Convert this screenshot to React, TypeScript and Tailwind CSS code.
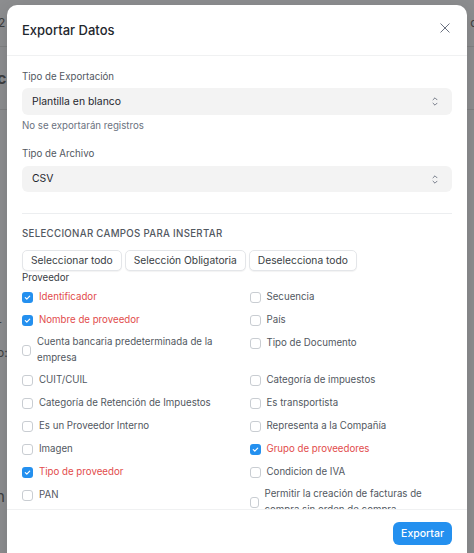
import React from "react";

type Field = { label: string; checked?: boolean; req?: boolean; squish?: boolean };

const left: Field[] = [
  { label: "Identificador", checked: true, req: true },
  { label: "Nombre de proveedor", checked: true, req: true },
  { label: "Cuenta bancaria predeterminada de la empresa", squish: true },
  { label: "CUIT/CUIL" },
  { label: "Categoría de Retención de Impuestos" },
  { label: "Es un Proveedor Interno" },
  { label: "Imagen" },
  { label: "Tipo de proveedor", checked: true, req: true },
  { label: "PAN" },
];

const right: Field[] = [
  { label: "Secuencia" },
  { label: "País" },
  { label: "Tipo de Documento" },
  { label: "Categoría de impuestos" },
  { label: "Es transportista" },
  { label: "Representa a la Compañía" },
  { label: "Grupo de proveedores", checked: true, req: true },
  { label: "Condicion de IVA" },
  { label: "Permitir la creación de facturas de compra sin orden de compra", squish: true },
];

function Check({ checked, squish }: { checked?: boolean; squish?: boolean }) {
  if (checked) {
    return (
      <span className="flex h-[11px] w-[11px] shrink-0 items-center justify-center rounded-[3px] bg-[#2490ef]">
        <svg width="7" height="7" viewBox="0 0 8 8" fill="none">
          <path d="M1.5 4.2 3.2 5.8 6.5 2.4" stroke="white" strokeWidth="1.4" strokeLinecap="round" strokeLinejoin="round" />
        </svg>
      </span>
    );
  }
  return (
    <span
      className={`block h-[11px] shrink-0 rounded-[3px] border border-[#c9cdd2] bg-white ${
        squish ? "w-[9px]" : "w-[11px]"
      }`}
    />
  );
}

function Row({ f }: { f: Field }) {
  return (
    <div className="flex min-h-[18px] items-center gap-[6px]">
      <Check checked={f.checked} squish={f.squish} />
      <span className={`leading-[16px] ${f.req ? "text-[#e24c4c]" : "text-[#525861]"}`}>{f.label}</span>
    </div>
  );
}

function Chevrons() {
  return (
    <svg width="6" height="11" viewBox="0 0 6 11" fill="none">
      <path d="M1 3.8 3 1.8 5 3.8" stroke="#6b7280" strokeWidth="0.9" strokeLinecap="round" strokeLinejoin="round" />
      <path d="M1 7.2 3 9.2 5 7.2" stroke="#6b7280" strokeWidth="0.9" strokeLinecap="round" strokeLinejoin="round" />
    </svg>
  );
}

function Select({ value, h }: { value: string; h: string }) {
  return (
    <div
      className={`flex ${h} items-center justify-between rounded-[6px] bg-[#f3f3f3] pl-[10px] pr-[14px] text-[10.4px] text-[#1f272e]`}
    >
      <span>{value}</span>
      <Chevrons />
    </div>
  );
}

function Btn({ children }: { children: React.ReactNode }) {
  return (
    <button className="h-[21px] rounded-[5px] border border-[#e4e6e9] bg-white px-[8px] text-[10.25px] leading-[19px] text-[#383d43] shadow-[0_1px_1px_rgba(0,0,0,0.05)]">
      {children}
    </button>
  );
}

export default function App() {
  return (
    <div
      className="relative h-[553px] w-[474px] overflow-hidden bg-[#8c8d8f]"
      style={{ fontFamily: "Inter, 'Noto Sans', sans-serif" }}
    >
      {/* dimmed page behind */}
      <div className="flex flex-col text-[#3d3e40]">
        <div className="flex h-[47px] items-center justify-between border-b border-[#7f8082] text-[12px]">
          <span className="-ml-[2px]">2</span>
          <span className="-mr-[3px]">c</span>
        </div>
        <div className="flex h-[63px] items-center border-b border-[#7f8082] text-[16px] font-bold">
          <span className="-ml-[3px]">c:</span>
        </div>
        <div className="h-[206px]" />
        <div className="text-[12px]">
          <span className="-ml-[3px]">r</span>
        </div>
        <div className="mt-[10px] text-[12px]">
          <span className="-ml-[3px]">o:</span>
        </div>
        <div className="mt-[124px] text-[15px]">
          <span className="-ml-[4px]">n</span>
        </div>
      </div>

      {/* modal */}
      <div className="absolute left-[7px] top-[5px] flex h-[560px] w-[460px] flex-col overflow-hidden rounded-[10px] bg-white shadow-[0_4px_16px_rgba(0,0,0,0.12)]">
        <div className="flex h-[51px] shrink-0 items-center justify-between border-b border-[#f0f1f2] pl-[15px] pr-[17px]">
          <h2 className="pt-[2px] text-[13px] font-medium text-[#1f272e]">Exportar Datos</h2>
          <svg width="10" height="10" viewBox="0 0 10 10" fill="none" className="-mt-[4px]">
            <path d="M0.8 0.8 9.2 9.2M9.2 0.8 0.8 9.2" stroke="#6b7280" strokeWidth="1" strokeLinecap="round" />
          </svg>
        </div>

        <div className="flex h-[453px] shrink-0 flex-col overflow-hidden px-[15px] pt-[13px] text-[9.7px]">
          <div className="leading-[16px] text-[#525861]">Tipo de Exportación</div>
          <div className="mt-[3px]">
            <Select value="Plantilla en blanco" h="h-[27px]" />
          </div>
          <div className="mt-[3px] leading-[16px] text-[#6b7280]">No se exportarán registros</div>

          <div className="mt-[12px] leading-[16px] text-[#525861]">Tipo de Archivo</div>
          <div className="mt-[4px]">
            <Select value="CSV" h="h-[26px]" />
          </div>

          <div className="mt-[21px] border-t border-[#eceef0]" />

          <div className="mt-[12px] text-[9.7px] font-medium uppercase leading-[16px] tracking-[0.3px] text-[#525861]">
            Seleccionar campos para insertar
          </div>
          <div className="mt-[8px] flex gap-[3px]">
            <Btn>Seleccionar todo</Btn>
            <Btn>Selección Obligatoria</Btn>
            <Btn>Deselecciona todo</Btn>
          </div>
          <div className="leading-[13px] text-[#383d43]">Proveedor</div>

          <div className="mt-[4px] grid grid-cols-2 items-start gap-x-[25px] gap-y-[5px]">
            {left.map((f, i) => (
              <React.Fragment key={i}>
                <Row f={f} />
                <Row f={right[i]} />
              </React.Fragment>
            ))}
          </div>
        </div>

        <div className="flex shrink-0 justify-end border-t border-[#f0f1f2] px-[15px] pt-[12px]">
          <button className="h-[23px] rounded-[6px] bg-[#2490ef] px-[8px] text-[10.5px] font-medium text-white">
            Exportar
          </button>
        </div>
      </div>
    </div>
  );
}
